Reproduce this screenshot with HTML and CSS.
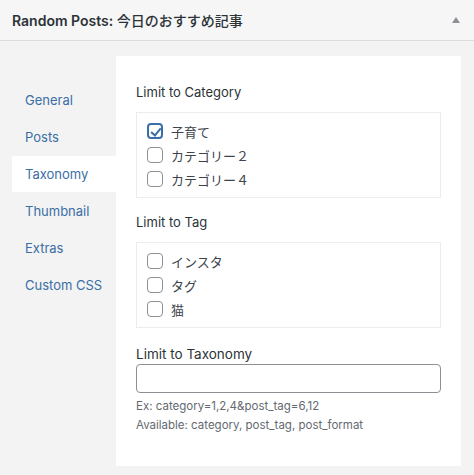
FILE: index.html
```html
<!DOCTYPE html>
<html lang="ja">
<head>
  <meta charset="UTF-8">
  <title>Random Posts</title>
  <link rel="stylesheet" href="styles.css">
</head>
<body>
  <div class="postbox">
    <div class="postbox-header">
      <h2>Random Posts: <span class="sub">今日のおすすめ記事</span></h2>
      <span class="toggle"></span>
    </div>
    <div class="inside">
      <ul class="tabs">
        <li>General</li>
        <li>Posts</li>
        <li class="active">Taxonomy</li>
        <li>Thumbnail</li>
        <li>Extras</li>
        <li>Custom CSS</li>
      </ul>
      <div class="panel">
        <div class="field">
          <div class="field-label">Limit to Category</div>
          <div class="checklist">
            <label><span class="cb checked"></span>子育て</label>
            <label><span class="cb"></span>カテゴリー２</label>
            <label><span class="cb"></span>カテゴリー４</label>
          </div>
        </div>
        <div class="field">
          <div class="field-label">Limit to Tag</div>
          <div class="checklist">
            <label><span class="cb"></span>インスタ</label>
            <label><span class="cb"></span>タグ</label>
            <label><span class="cb"></span>猫</label>
          </div>
        </div>
        <div class="field last">
          <div class="field-label tight">Limit to Taxonomy</div>
          <div class="text-input"></div>
          <p class="desc">Ex: category=1,2,4&amp;post_tag=6,12</p>
          <p class="desc">Available: category, post_tag, post_format</p>
        </div>
      </div>
    </div>
  </div>
</body>
</html>
```

FILE: styles.css
```css
* {
  box-sizing: border-box;
}
body {
  margin: 0;
  background: #f3f3f3;
  font-family: Inter, "Noto Sans CJK JP", sans-serif;
  color: #3c434a;
}
.postbox-header {
  height: 41px;
  background: #f6f6f6;
  border-bottom: 1px solid #dcdcde;
  display: flex;
  align-items: center;
  justify-content: space-between;
  padding: 0 14px 0 12px;
}
.postbox-header h2 {
  margin: 0;
  font-size: 14px;
  font-weight: 600;
  color: #2c3338;
}
.postbox-header .sub {
  font-weight: 500;
}
.toggle {
  width: 0;
  height: 0;
  border-left: 4px solid transparent;
  border-right: 4px solid transparent;
  border-bottom: 6px solid #8c8f94;
}
.inside {
  display: flex;
  padding: 15px 13px 10px 12px;
}
.tabs {
  list-style: none;
  margin: 0;
  padding: 26px 0 0;
  width: 104px;
  flex-shrink: 0;
}
.tabs li {
  height: 37px;
  line-height: 37px;
  padding-left: 13px;
  font-size: 13px;
  color: #3a6ea5;
}
.tabs li.active {
  background: #fff;
  height: 36px;
  line-height: 36px;
  margin-bottom: 1px;
}
.panel {
  flex: 1;
  background: #fff;
  padding: 26px 20px 31px;
}
.field {
  margin-bottom: 14px;
}
.field.last {
  margin-top: 16px;
  margin-bottom: 0;
}
.field-label {
  font-size: 13px;
  line-height: 20px;
  color: #2c3338;
  margin-bottom: 10px;
}
.field-label.tight {
  margin-bottom: 0;
  font-size: 13.5px;
}
.checklist {
  border: 1px solid #ececec;
  padding: 6px 10px;
}
.checklist label {
  display: flex;
  align-items: center;
  height: 24px;
  font-size: 13px;
  color: #3c434a;
}
.cb {
  width: 16px;
  height: 16px;
  border: 1px solid #8c8f94;
  border-radius: 4px;
  margin-right: 8px;
  position: relative;
}
.cb.checked {
  border: 2px solid #3a6ea5;
}
.cb.checked::after {
  content: "";
  position: absolute;
  left: 3.5px;
  top: 0.5px;
  width: 4px;
  height: 8px;
  border-right: 2px solid #3a6ea5;
  border-bottom: 2px solid #3a6ea5;
  transform: rotate(40deg);
}
.text-input {
  height: 29px;
  border: 1px solid #8c8f94;
  border-radius: 4px;
  margin-bottom: 4px;
}
.desc {
  margin: 0;
  font-size: 11.5px;
  line-height: 19px;
  color: #646970;
}
```
